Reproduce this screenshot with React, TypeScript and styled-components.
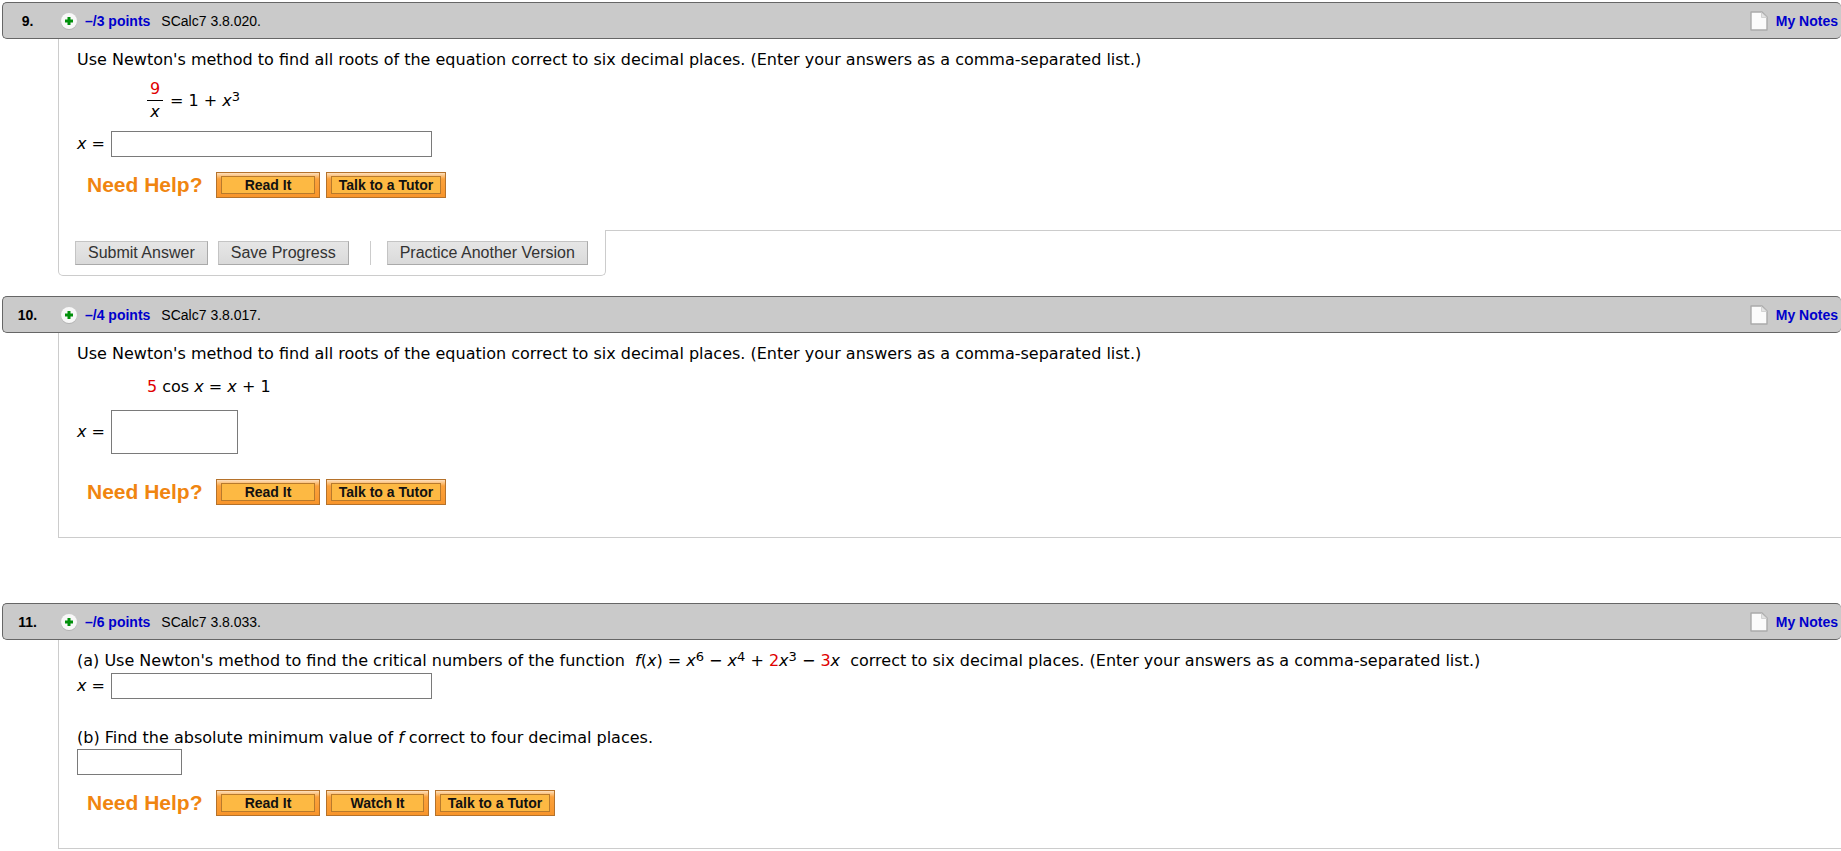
import React from "react";
import styled, { createGlobalStyle } from "styled-components";

const GlobalStyle = createGlobalStyle`
  *, *::before, *::after { box-sizing: border-box; }
  body {
    margin: 0;
    background: #fff;
    color: #000;
    font: 16px/20px Verdana, "DejaVu Sans", sans-serif;
  }
`;

const uiFont = `Arial, "Liberation Sans", sans-serif`;

const Page = styled.main`
  padding: 2px 0 2px 2px;
`;

const Question = styled.section<{ $after?: number }>`
  margin-bottom: ${(p) => p.$after ?? 0}px;
`;

const Header = styled.header`
  display: flex;
  align-items: center;
  height: 37px;
  padding-right: 3px;
  border: 1px solid #666;
  border-right-width: 0;
  border-radius: 5px;
  background: #cacaca;
  font: 14px/18px ${uiFont};
`;

const Number = styled.h2`
  width: 57px;
  margin: 0;
  padding-right: 8px;
  font-size: 14px;
  line-height: 18px;
  text-align: center;
`;

const HeaderLink = styled.a<{ $gap: number }>`
  display: flex;
  align-items: center;
  gap: ${(p) => p.$gap}px;
  color: #0000cc;
  font-weight: bold;
  text-decoration: none;
`;

const Source = styled.span`
  flex: 1;
  padding-left: 11px;
`;

const Content = styled.div`
  margin-left: 56px;
  padding: 11px 18px 32px;
  border-left: 1px solid #ccc;
`;

const ClosedContent = styled(Content)`
  border-bottom: 1px solid #ccc;
`;

const Prompt = styled.p<{ $before?: number }>`
  margin: ${(p) => p.$before ?? 0}px 0 0;
`;

const Equation = styled.div<{ $before: number }>`
  display: flex;
  align-items: center;
  gap: 7px;
  margin-top: ${(p) => p.$before}px;
  padding-left: 70px;
`;

const Fraction = styled.span`
  display: flex;
  flex-direction: column;
  width: 16px;
  line-height: 22px;
  text-align: center;
`;

const Numerator = styled.span`
  border-bottom: 1px solid #000;
`;

const Value = styled.span`
  color: #e00000;
`;

const Sup = styled.sup`
  font-size: 13px;
  line-height: 0;
  vertical-align: 5px;
`;

const AnswerRow = styled.div<{ $before: number }>`
  display: flex;
  align-items: center;
  gap: 6px;
  margin-top: ${(p) => p.$before}px;
`;

const AnswerInput = styled.input<{ $width: number }>`
  width: ${(p) => p.$width}px;
  height: 26px;
  padding: 2px 4px;
  border: 1px solid #7a7a7a;
  background: #fff;
  font: inherit;
`;

const AnswerArea = styled.textarea`
  display: block;
  width: 127px;
  height: 44px;
  padding: 2px 4px;
  border: 1px solid #7a7a7a;
  background: #fff;
  font: inherit;
  resize: none;
`;

const HelpRow = styled.div<{ $before: number }>`
  display: flex;
  align-items: center;
  gap: 6px;
  margin-top: ${(p) => p.$before}px;
  padding-left: 10px;
`;

const HelpTitle = styled.strong`
  width: 123px;
  color: #f08510;
  font: bold 21px/26px ${uiFont};
`;

const HelpButton = styled.button<{ $width: number }>`
  width: ${(p) => p.$width}px;
  height: 26px;
  padding: 3px 4px;
  border: 1px solid #b5722b;
  background: linear-gradient(#fde0bd 0, #fba23c 6px, #f8952b 100%);
  color: #111;
  font: bold 14px/16px ${uiFont};
`;

const HelpFace = styled.span`
  display: block;
  border: 1px solid #b87a2c;
  background: #fdb943;
`;

const Footer = styled.footer`
  display: flex;
  margin-left: 56px;
`;

const Actions = styled.div`
  display: flex;
  align-items: center;
  gap: 10px;
  padding: 11px 17px 10px 16px;
  border: 1px solid #ccc;
  border-top-width: 0;
  border-radius: 0 0 5px 5px;
`;

const FooterRule = styled.div`
  flex: 1;
  border-top: 1px solid #ccc;
`;

const ActionButton = styled.button`
  height: 24px;
  padding: 0 12px;
  border: 1px solid;
  border-color: #c4c4c4 #aaa #aaa #c4c4c4;
  background: linear-gradient(#e6e6e6, #dadada);
  color: #333;
  font: 16px/20px ${uiFont};
`;

const Divider = styled.span`
  align-self: stretch;
  width: 1px;
  margin: 0 6px 0 11px;
  background: #ccc;
`;

const PlusIcon = () => (
  <svg width="18" height="18" viewBox="0 0 18 18" aria-hidden="true">
    <circle cx="9" cy="10" r="8" fill="#b4b4b4" />
    <circle cx="9" cy="9" r="8" fill="#f8f8f8" />
    <path d="M9 5v8M5 9h8" stroke="#00900a" strokeWidth="3" />
  </svg>
);

const NoteIcon = () => (
  <svg width="18" height="20" viewBox="0 0 18 20" aria-hidden="true">
    <path d="M1 1h11l5 5v13H1z" fill="#fbfbfb" stroke="#aaa" strokeWidth="1.4" strokeLinejoin="round" />
    <path d="M11.5 1.5v5H17z" fill="#e4e4e4" stroke="#ccc" strokeWidth="0.8" />
  </svg>
);

function QuestionHeader({ n, points, source }: { n: number; points: number; source: string }) {
  return (
    <Header>
      <Number>{n}.</Number>
      <HeaderLink href="#points" $gap={7}>
        <PlusIcon />
        {`–/${points} points`}
      </HeaderLink>
      <Source>{source}</Source>
      <HeaderLink href="#notes" $gap={8}>
        <NoteIcon />
        My Notes
      </HeaderLink>
    </Header>
  );
}

function Help({ before, watch }: { before: number; watch?: boolean }) {
  return (
    <HelpRow $before={before}>
      <HelpTitle>Need Help?</HelpTitle>
      <HelpButton type="button" $width={104}><HelpFace>Read It</HelpFace></HelpButton>
      {watch && <HelpButton type="button" $width={103}><HelpFace>Watch It</HelpFace></HelpButton>}
      <HelpButton type="button" $width={120}><HelpFace>Talk to a Tutor</HelpFace></HelpButton>
    </HelpRow>
  );
}

const rootsPrompt =
  "Use Newton's method to find all roots of the equation correct to six decimal places. (Enter your answers as a comma-separated list.)";

export default function App() {
  return (
    <>
      <GlobalStyle />
      <Page>
        <Question $after={20}>
          <QuestionHeader n={9} points={3} source="SCalc7 3.8.020." />
          <Content>
            <Prompt>{rootsPrompt}</Prompt>
            <Equation $before={8}>
              <Fraction>
                <Numerator><Value>9</Value></Numerator>
                <i>x</i>
              </Fraction>
              <span>= 1 + <i>x</i><Sup>3</Sup></span>
            </Equation>
            <AnswerRow $before={8}>
              <label htmlFor="q9"><i>x</i> =</label>
              <AnswerInput id="q9" type="text" $width={321} />
            </AnswerRow>
            <Help before={15} />
          </Content>
          <Footer>
            <Actions>
              <ActionButton type="button">Submit Answer</ActionButton>
              <ActionButton type="button">Save Progress</ActionButton>
              <Divider />
              <ActionButton type="button">Practice Another Version</ActionButton>
            </Actions>
            <FooterRule />
          </Footer>
        </Question>

        <Question $after={65}>
          <QuestionHeader n={10} points={4} source="SCalc7 3.8.017." />
          <ClosedContent>
            <Prompt>{rootsPrompt}</Prompt>
            <Equation $before={13}>
              <span><Value>5</Value> cos <i>x</i> = <i>x</i> + 1</span>
            </Equation>
            <AnswerRow $before={13}>
              <label htmlFor="q10"><i>x</i> =</label>
              <AnswerArea id="q10" />
            </AnswerRow>
            <Help before={25} />
          </ClosedContent>
        </Question>

        <Question>
          <QuestionHeader n={11} points={6} source="SCalc7 3.8.033." />
          <ClosedContent>
            <Prompt>
              (a) Use Newton's method to find the critical numbers of the function&nbsp; <i>f</i>(<i>x</i>) = <i>x</i><Sup>6</Sup> − <i>x</i><Sup>4</Sup> + <Value>2</Value><i>x</i><Sup>3</Sup> − <Value>3</Value><i>x</i>&nbsp; correct to six decimal places. (Enter your answers as a comma-separated list.)
            </Prompt>
            <AnswerRow $before={2}>
              <label htmlFor="q11a"><i>x</i> =</label>
              <AnswerInput id="q11a" type="text" $width={321} />
            </AnswerRow>
            <Prompt $before={29}>
              <label htmlFor="q11b">(b) Find the absolute minimum value of <i>f</i> correct to four decimal places.</label>
            </Prompt>
            <AnswerRow $before={1}>
              <AnswerInput id="q11b" type="text" $width={105} />
            </AnswerRow>
            <Help before={15} watch />
          </ClosedContent>
        </Question>
      </Page>
    </>
  );
}
